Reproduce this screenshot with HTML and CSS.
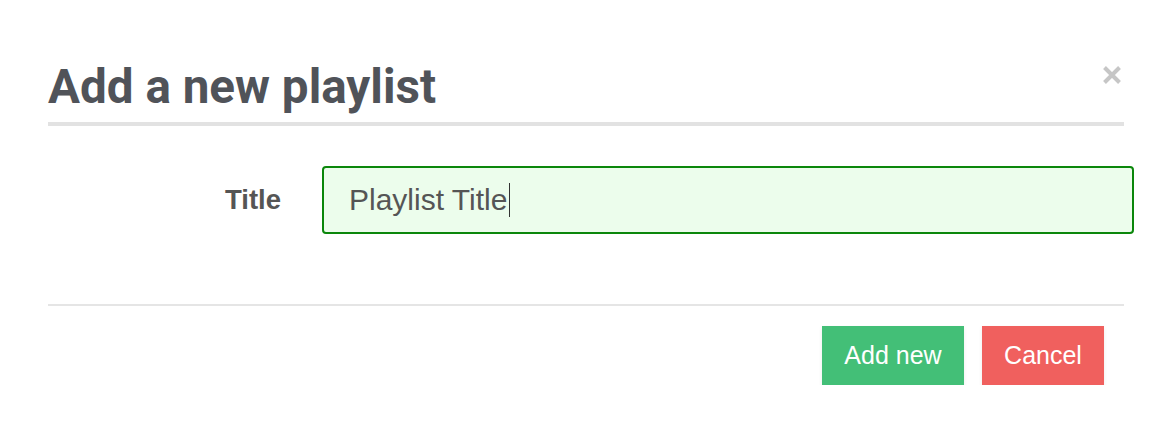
FILE: index.html
```html
<!DOCTYPE html>
<html>
<head>
<meta charset="utf-8">
<link rel="stylesheet" href="styles.css">
</head>
<body>
<div class="modal">
  <div class="modal-header">
    <h1 class="modal-title">Add a new playlist</h1>
    <button class="close" aria-label="Close">
      <svg width="20" height="20" viewBox="0 0 20 20"><path d="M2.5 2.5 L17.5 17.5 M17.5 2.5 L2.5 17.5" stroke="#c6c6c6" stroke-width="4" fill="none"/></svg>
    </button>
  </div>
  <div class="modal-body">
    <label class="form-label">Title</label>
    <div class="form-input"><span class="input-text">Playlist Title</span><span class="caret"></span></div>
  </div>
  <div class="modal-footer">
    <button class="btn btn-add">Add new</button>
    <button class="btn btn-cancel">Cancel</button>
  </div>
</div>
</body>
</html>
```
FILE: styles.css
```css
html, body {
  margin: 0;
  padding: 0;
  background: #ffffff;
}
.modal {
  width: 1076px;
  margin-left: 48px;
}
.modal-header {
  display: flex;
  justify-content: space-between;
  align-items: flex-start;
  padding-top: 61px;
  padding-bottom: 8px;
  border-bottom: 4px solid #e2e2e2;
}
.modal-title {
  margin: 0;
  font-family: Roboto, "Liberation Sans", sans-serif;
  font-weight: 700;
  font-size: 47.6px;
  line-height: 53px;
  color: #505359;
}
.close {
  border: 0;
  background: none;
  padding: 0;
  margin: 4px 2px 0 0;
  width: 20px;
  height: 20px;
  display: block;
}
.close svg { display: block; }
.modal-body {
  display: flex;
  align-items: center;
  margin-top: 40px;
}
.form-label {
  flex: none;
  width: 233px;
  margin-right: 41px;
  text-align: right;
  font-family: "Liberation Sans", Arial, sans-serif;
  font-weight: bold;
  font-size: 27.5px;
  color: #555555;
}
.form-input {
  flex: none;
  box-sizing: border-box;
  width: 812px;
  height: 68px;
  border: 2px solid #0b870b;
  border-radius: 4px;
  background: #ecfdec;
  padding-left: 25px;
  display: flex;
  align-items: center;
  font-family: "Liberation Sans", Arial, sans-serif;
  font-size: 30px;
  color: #555555;
}
.caret {
  display: inline-block;
  width: 1px;
  height: 34px;
  background: #333333;
  margin-left: 2px;
}
.modal-footer {
  margin-top: 70px;
  border-top: 2px solid #e5e5e5;
  padding-top: 20px;
  padding-right: 20px;
  display: flex;
  justify-content: flex-end;
  gap: 18px;
}
.btn {
  border: 0;
  margin: 0;
  font-family: "Liberation Sans", Arial, sans-serif;
  font-size: 25px;
  line-height: 27px;
  padding: 16px 0;
  color: #ffffff;
  text-align: center;
  box-shadow: 0 2px 4px rgba(0, 0, 0, 0.08);
}
.btn-add {
  background: #43bf77;
  width: 142px;
}
.btn-cancel {
  background: #f0605e;
  width: 122px;
}
```
